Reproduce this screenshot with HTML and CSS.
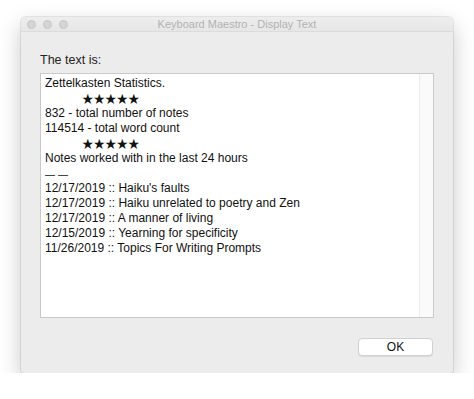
FILE: index.html
```html
<!DOCTYPE html>
<html lang="en">
<head>
    <meta charset="UTF-8">
    <meta name="viewport" content="width=device-width, initial-scale=1.0">
    <title>Keyboard Maestro - Display Text</title>
    <link rel="stylesheet" href="styles.css">
</head>
<body>
    <div class="window">
        <div class="titlebar">
            <div class="lights">
                <span class="light"></span>
                <span class="light"></span>
                <span class="light"></span>
            </div>
            <span class="title">Keyboard Maestro - Display Text</span>
        </div>

        <div class="content">
            <div class="label">The text is:</div>
            <div class="textbox">
                <div class="text">
                    <div class="line">Zettelkasten Statistics.</div>
                    <div class="line stars">★★★★★</div>
                    <div class="line">832 - total number of notes</div>
                    <div class="line">114514 - total word count</div>
                    <div class="line stars">★★★★★</div>
                    <div class="line">Notes worked with in the last 24 hours</div>
                    <div class="line dashes">——</div>
                    <div class="line">12/17/2019 :: Haiku's faults</div>
                    <div class="line">12/17/2019 :: Haiku unrelated to poetry and Zen</div>
                    <div class="line">12/17/2019 :: A manner of living</div>
                    <div class="line">12/15/2019 :: Yearning for specificity</div>
                    <div class="line">11/26/2019 :: Topics For Writing Prompts</div>
                </div>
                <div class="scrolltrack"></div>
            </div>
            <div class="buttons">
                <button class="btn">OK</button>
            </div>
        </div>
    </div>
</body>
</html>
```

FILE: styles.css
```css
* {
    margin: 0;
    padding: 0;
    box-sizing: border-box;
    font-family: 'Liberation Sans', Arial, sans-serif;
}

body {
    background: #ffffff;
    color: #111111;
    padding: 17px 0 0 21px;
}

.window {
    width: 432px;
    height: 356px;
    background: #ececec;
    border-radius: 5px 5px 3px 3px;
    box-shadow: 0 0 0 1px rgba(0, 0, 0, 0.08), 0 8px 22px rgba(0, 0, 0, 0.22);
    display: flex;
    flex-direction: column;
}

.titlebar {
    height: 15px;
    border-bottom: 1px solid #dcdcdc;
    background: linear-gradient(#ededed, #e6e6e6);
    border-radius: 5px 5px 0 0;
    display: flex;
    align-items: center;
    position: relative;
}

.lights {
    display: flex;
    gap: 7px;
    padding-left: 6px;
}

.light {
    width: 9px;
    height: 9px;
    border-radius: 50%;
    background: #d4d4d4;
    border: 1px solid #c6c6c6;
}

.title {
    position: absolute;
    left: 0;
    right: 0;
    text-align: center;
    font-size: 11px;
    color: #b2b2b2;
    line-height: 15px;
}

.content {
    flex: 1;
    padding: 20px 19px 17px 19px;
    display: flex;
    flex-direction: column;
}

.label {
    font-size: 12.5px;
    line-height: 16px;
    color: #222222;
    margin-bottom: 5px;
}

.textbox {
    height: 245px;
    background: #ffffff;
    border: 1px solid #c9c9c9;
    display: flex;
}

.text {
    flex: 1;
    padding: 2px 4px;
    font-size: 12px;
    line-height: 15px;
    color: #111111;
}

.line {
    white-space: nowrap;
    height: 15px;
}

.stars {
    padding-left: 37px;
    font-family: 'Noto Sans CJK JP', 'DejaVu Sans', sans-serif;
    font-size: 11.5px;
    line-height: 15px;
}

.dashes {
    font-size: 10px;
    letter-spacing: 3px;
    padding-top: 1px;
}

.scrolltrack {
    width: 14px;
    background: #fafafa;
    border-left: 1px solid #ececec;
}

.buttons {
    display: flex;
    justify-content: flex-end;
    margin-top: 20px;
    padding-right: 1px;
}

.btn {
    width: 75px;
    height: 18px;
    background: #ffffff;
    border: 1px solid #d0d0d0;
    border-radius: 4px;
    box-shadow: 0 1px 1px rgba(0, 0, 0, 0.08);
    font-size: 12px;
    color: #111111;
}
```
